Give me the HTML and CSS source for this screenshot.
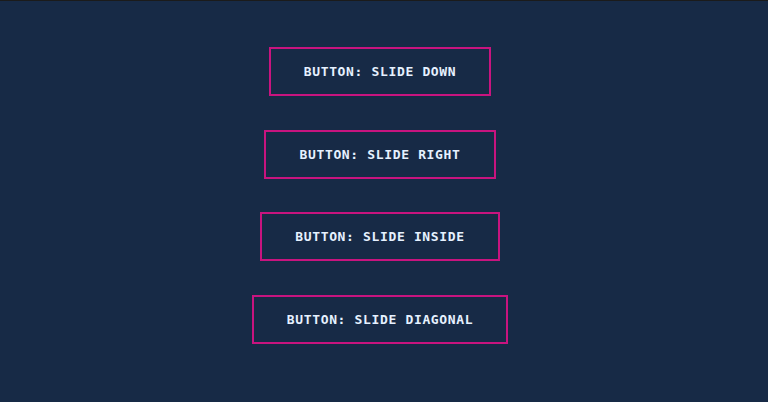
FILE: index.html
```html
<!DOCTYPE html>
<html lang="en">
<head>
<meta charset="utf-8">
<title>Slide buttons</title>
<link rel="stylesheet" href="styles.css">
</head>
<body>
  <main class="stack">
    <button class="btn">Button: Slide Down</button>
    <button class="btn">Button: Slide Right</button>
    <button class="btn">Button: Slide Inside</button>
    <button class="btn">Button: Slide Diagonal</button>
  </main>
</body>
</html>
```
FILE: styles.css
```css
html, body {
  margin: 0;
  height: 100%;
}

body {
  background: #172a46;
  border-top: 1px solid #1b1b1b;
  box-sizing: border-box;
}

.stack {
  display: flex;
  flex-direction: column;
  align-items: center;
  gap: 33.6px;
  padding: 46px 8px 0 0;
}

.btn {
  font-family: "DejaVu Sans Mono", monospace;
  font-weight: bold;
  font-size: 13px;
  letter-spacing: 0.65px;
  text-transform: uppercase;
  color: #e6f1ff;
  background: transparent;
  border: 2px solid #c8147f;
  padding: 0 33px;
  height: 49px;
  line-height: 45px;
  cursor: pointer;
}
```
